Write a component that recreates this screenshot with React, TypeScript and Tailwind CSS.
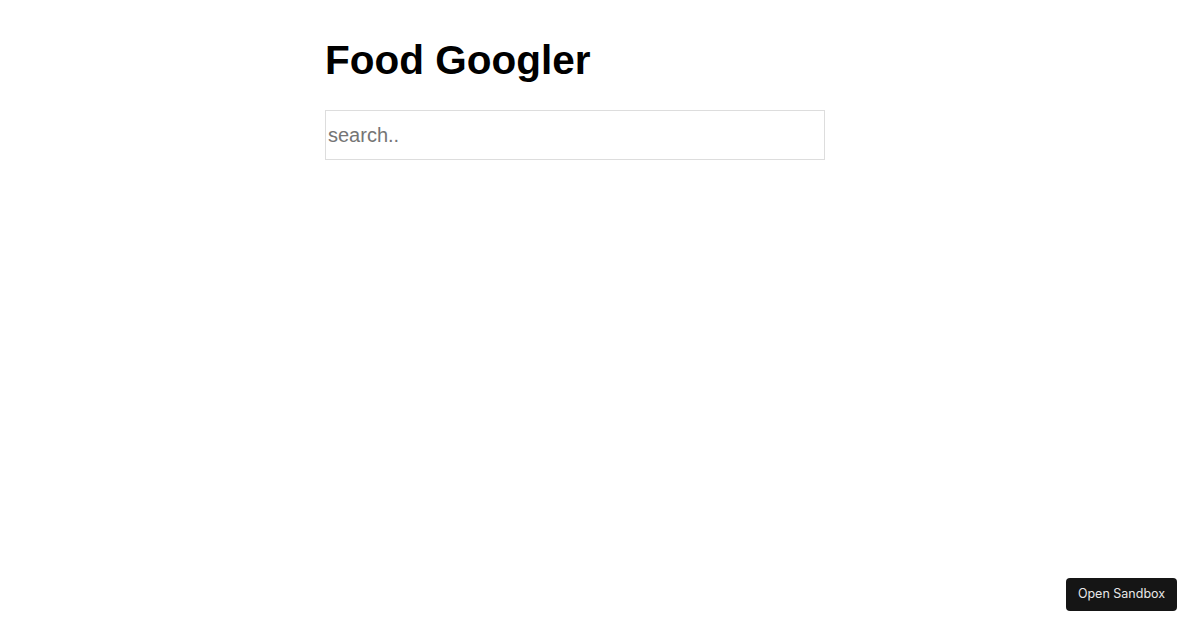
import React from "react";

export default function App() {
  return (
    <div className="min-h-[630px] bg-white relative font-['Liberation_Sans',Arial,sans-serif]">
      <div className="mx-auto w-[550px] pt-[37px] flex flex-col">
        <h1 className="text-[40.5px] leading-[46px] font-bold text-black m-0">Food Googler</h1>
        <input
          type="text"
          placeholder="search.."
          className="mt-[27px] block w-[500px] h-[50px] border border-[#dddddd] px-[2px] text-[20px] text-black placeholder:text-[#757575] outline-none font-['Liberation_Sans',Arial,sans-serif]"
        />
      </div>
      <button className="fixed right-[23px] bottom-[19px] w-[111px] h-[33px] rounded-[4px] bg-[#151515] text-[#e8e8e8] text-[12.5px] flex items-center justify-center font-['Inter','Liberation_Sans',sans-serif]">
        Open Sandbox
      </button>
    </div>
  );
}
